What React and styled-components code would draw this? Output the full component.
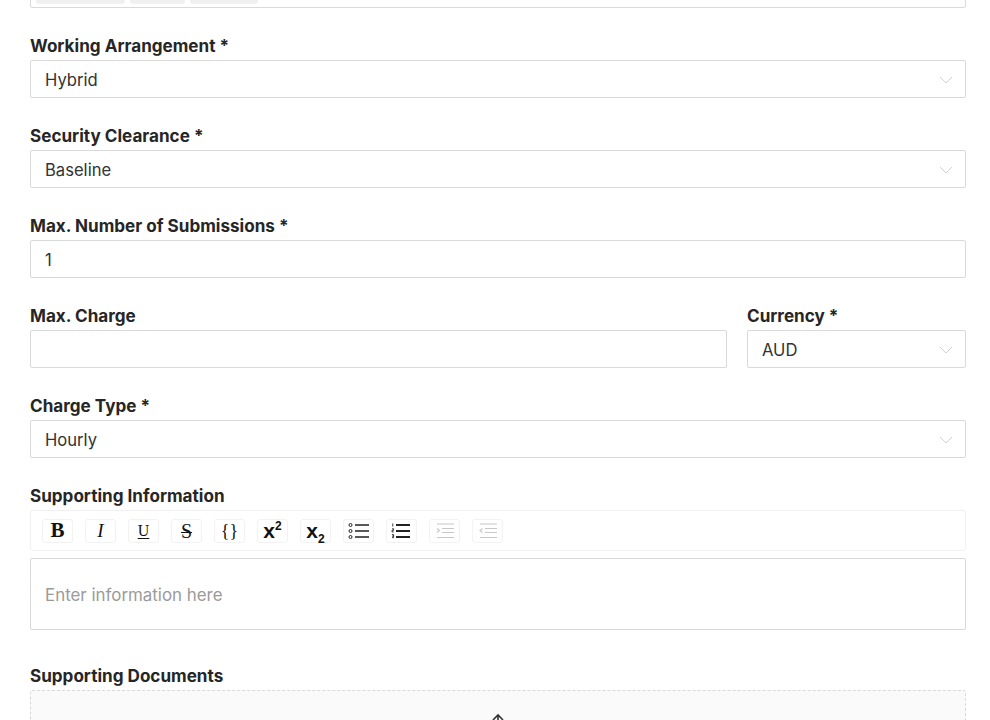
import styled, { createGlobalStyle } from 'styled-components'

const Global = createGlobalStyle`
	* { box-sizing: border-box; }
	body {
		margin: 0;
		background: #ffffff;
		font-family: Inter, 'Liberation Sans', sans-serif;
		color: #333333;
		overflow: hidden;
	}
`

const Form = styled.form`
	width: 966px;
	padding-left: 30px;
	display: flex;
	flex-direction: column;
	gap: 28px;
`

const TagBox = styled.div`
	margin-top: -30px;
	height: 38px;
	border: 1px solid #d9d9d9;
	border-radius: 2px;
	display: flex;
	align-items: flex-end;
	gap: 5px;
	padding: 0 5px 3px;
`

const Tag = styled.span`
	width: ${(p) => p.w}px;
	height: 22px;
	background: #f0f0f0;
	border-radius: 3px;
`

const Field = styled.div`
	display: flex;
	flex-direction: column;
	gap: 4px;
	flex: ${(p) => (p.grow ? 1 : 'none')};
	width: ${(p) => (p.w ? p.w + 'px' : 'auto')};
`

const Row = styled.div`
	display: flex;
	gap: 20px;
`

const Label = styled.label`
	font-size: 17.1px;
	line-height: 20px;
	font-weight: 700;
	color: #262626;
	height: 20px;
	white-space: nowrap;
`

const Box = styled.div`
	height: 38px;
	border: 1px solid #d9d9d9;
	border-radius: 2px;
	display: flex;
	align-items: center;
	justify-content: space-between;
	padding: 2px 12px 0 14px;
	font-size: 16.6px;
	color: #333333;
`

const Chevron = () => (
	<svg width='14' height='8' viewBox='0 0 14 8' fill='none'>
		<path d='M1 1 L7 7 L13 1' stroke='#cccccc' strokeWidth='0.9' />
	</svg>
)

const Select = ({ value }) => (
	<Box>
		<span>{value}</span>
		<Chevron />
	</Box>
)

const Toolbar = styled.div`
	height: 41px;
	border: 1px solid #f0f0f0;
	border-radius: 3px;
	display: flex;
	align-items: center;
	gap: 12px;
	padding: 0 11px;
	margin-bottom: 3px;
`

const ToolButton = styled.button`
	width: 31px;
	height: 24px;
	padding: 0;
	border: 1px solid #f2f2f2;
	border-radius: 3px;
	background: #ffffff;
	display: flex;
	align-items: center;
	justify-content: center;
	color: #111111;
	line-height: 1;
	overflow: visible;
`

const Glyph = styled.span`
	font-family: ${(p) => (p.sans ? "'Liberation Sans', Arial, sans-serif" : "'Liberation Serif', serif")};
	font-weight: ${(p) => (p.bold ? 700 : 400)};
	font-style: ${(p) => (p.italic ? 'italic' : 'normal')};
	font-size: ${(p) => p.size || 15}px;
	text-decoration: ${(p) => p.deco || 'none'};
	text-decoration-thickness: 1px;
	text-underline-offset: 2px;
	white-space: nowrap;

	sup,
	sub {
		font-size: 12px;
		line-height: 0;
	}
`

const ListIcon = ({ numbered }) => (
	<svg width='22' height='16' viewBox='0 0 22 16' fill='none' stroke='#222' strokeWidth='1.3'>
		{numbered ? (
			<>
				<path d='M1.8 0.5 V3.5 M1 5.8 h1.6 v1.5 h-1.6 v1.6 h1.6 M1 11.6 h1.6 v3 h-1.6 M1 13.1 h1.6' strokeWidth='0.9' />
				<path d='M5 2 H19 M5 8 H19 M5 14 H19' strokeWidth='1.9' />
			</>
		) : (
			<>
				<circle cx='2.5' cy='2' r='1.5' strokeWidth='1' />
				<circle cx='2.5' cy='8' r='1.5' strokeWidth='1' />
				<circle cx='2.5' cy='14' r='1.5' strokeWidth='1' />
				<path d='M7 2 H21 M7 8 H21 M7 14 H21' />
			</>
		)}
	</svg>
)

const IndentIcon = ({ out }) => (
	<svg width='20' height='16' viewBox='0 0 20 16' fill='none' stroke='#c8c8c8' strokeWidth='1.1'>
		<path d='M2 1 H19 M7 5.5 H19 M7 9.5 H19 M2 14.5 H19' />
		{out ? <path d='M4.5 5.5 L2 7.5 L4.5 9.5' /> : <path d='M2 5.5 L4.5 7.5 L2 9.5' />}
	</svg>
)

const Editor = styled.div`
	height: 72px;
	border: 1px solid #d9d9d9;
	border-radius: 2px;
	padding: 2px 14px 0;
	display: flex;
	align-items: center;
	font-size: 16.9px;
	color: #9a9a9a;
`

const DocField = styled(Field)`
	margin-top: 8px;
`

const DropZone = styled.div`
	height: 120px;
	border: 1px dashed #d9d9d9;
	border-radius: 2px;
	background: #fafafa;
	display: flex;
	justify-content: center;
	padding-top: 22px;
`

const UploadIcon = () => (
	<svg width='22' height='22' viewBox='0 0 22 22' fill='none' stroke='#333' strokeWidth='1.6'>
		<path d='M11 2 V15 M6 7 L11 2 L16 7 M3 16 V20 H19 V16' />
	</svg>
)

export default () => {
	return (
		<>
			<Global />
			<Form>
				<TagBox>
					<Tag w={89} />
					<Tag w={55} />
					<Tag w={68} />
				</TagBox>
				<Field>
					<Label>Working Arrangement *</Label>
					<Select value='Hybrid' />
				</Field>
				<Field>
					<Label>Security Clearance *</Label>
					<Select value='Baseline' />
				</Field>
				<Field>
					<Label>Max. Number of Submissions *</Label>
					<Box>1</Box>
				</Field>
				<Row>
					<Field grow>
						<Label>Max. Charge</Label>
						<Box />
					</Field>
					<Field w={219}>
						<Label>Currency *</Label>
						<Select value='AUD' />
					</Field>
				</Row>
				<Field>
					<Label>Charge Type *</Label>
					<Select value='Hourly' />
				</Field>
				<Field>
					<Label>Supporting Information</Label>
					<Toolbar>
						<ToolButton type='button'><Glyph bold size={21}>B</Glyph></ToolButton>
						<ToolButton type='button'><Glyph italic size={19}>I</Glyph></ToolButton>
						<ToolButton type='button'><Glyph size={16} deco='underline'>U</Glyph></ToolButton>
						<ToolButton type='button'><Glyph size={20} deco='line-through'>S</Glyph></ToolButton>
						<ToolButton type='button'><Glyph size={18}>{'{}'}</Glyph></ToolButton>
						<ToolButton type='button'><Glyph sans bold size={21}>x<sup>2</sup></Glyph></ToolButton>
						<ToolButton type='button'><Glyph sans bold size={21}>x<sub>2</sub></Glyph></ToolButton>
						<ToolButton type='button'><ListIcon /></ToolButton>
						<ToolButton type='button'><ListIcon numbered /></ToolButton>
						<ToolButton type='button' disabled><IndentIcon /></ToolButton>
						<ToolButton type='button' disabled><IndentIcon out /></ToolButton>
					</Toolbar>
					<Editor>Enter information here</Editor>
				</Field>
				<DocField>
					<Label>Supporting Documents</Label>
					<DropZone>
						<UploadIcon />
					</DropZone>
				</DocField>
			</Form>
		</>
	)
}
